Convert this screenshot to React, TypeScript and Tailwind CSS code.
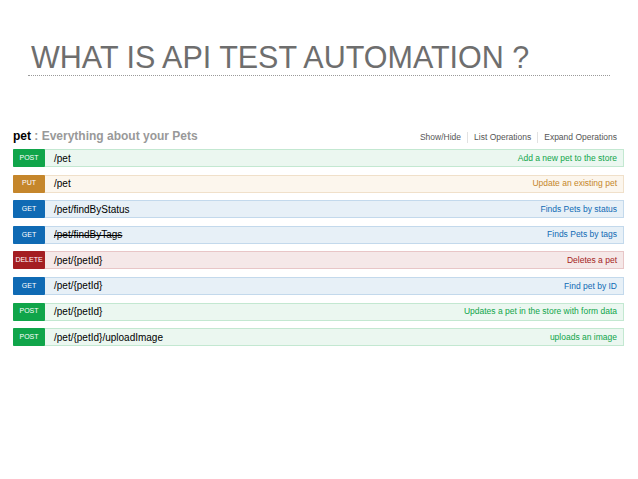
import React from "react";

type Op = { m: "POST" | "PUT" | "GET" | "DELETE"; path: string; desc: string; strike?: boolean };

const ops: Op[] = [
  { m: "POST", path: "/pet", desc: "Add a new pet to the store" },
  { m: "PUT", path: "/pet", desc: "Update an existing pet" },
  { m: "GET", path: "/pet/findByStatus", desc: "Finds Pets by status" },
  { m: "GET", path: "/pet/findByTags", desc: "Finds Pets by tags", strike: true },
  { m: "DELETE", path: "/pet/{petId}", desc: "Deletes a pet" },
  { m: "GET", path: "/pet/{petId}", desc: "Find pet by ID" },
  { m: "POST", path: "/pet/{petId}", desc: "Updates a pet in the store with form data" },
  { m: "POST", path: "/pet/{petId}/uploadImage", desc: "uploads an image" },
];

const styles: Record<Op["m"], { row: string; badge: string; text: string }> = {
  POST: { row: "bg-[#ebf7f0] border-[#c3e8d1]", badge: "bg-[#10a54a]", text: "text-[#10a54a]" },
  PUT: { row: "bg-[#fcf6ed] border-[#f0e0ca]", badge: "bg-[#c5862b]", text: "text-[#c5862b]" },
  GET: { row: "bg-[#e7f0f7] border-[#c3d9ec]", badge: "bg-[#0f6ab4]", text: "text-[#0f6ab4]" },
  DELETE: { row: "bg-[#f5e8e8] border-[#e8c6c7]", badge: "bg-[#a41e22]", text: "text-[#a41e22]" },
};

export default function App() {
  return (
    <div
      className="w-[638px] h-[479px] bg-white overflow-hidden"
      style={{ fontFamily: '"Liberation Sans", Arial, sans-serif' }}
    >
      <div className="pt-[40px] pl-[31px] pr-[20px]">
        <h1 className="text-[30.5px] leading-[34px] text-[#6e6e6e] font-normal whitespace-nowrap">
          WHAT IS API TEST AUTOMATION ?
        </h1>
      </div>
      <div className="ml-[28px] w-[582px] mt-[1px] border-b border-dotted border-[#9a9a9a]" />

      <div className="mt-[52px] pl-[13px] pr-[14px]">
        <div className="flex items-end justify-between h-[16px] mb-[5px]">
          <div className="text-[12px] leading-[16px] font-bold">
            <span className="text-black">pet</span>
            <span className="text-[#999]"> : Everything about your Pets</span>
          </div>
          <div className="flex items-center text-[8.5px] leading-[12px] text-[#555] pr-[7px] pb-[1px]">
            <span>Show/Hide</span>
            <span className="mx-[6px] h-[11px] border-l border-[#e2e2e2]" />
            <span>List Operations</span>
            <span className="mx-[6px] h-[11px] border-l border-[#e2e2e2]" />
            <span>Expand Operations</span>
          </div>
        </div>
        <div className="flex flex-col gap-[7.6px]">
          {ops.map((o, i) => {
            const s = styles[o.m];
            return (
              <div key={i} className={`flex items-center h-[18px] border ${s.row}`}>
                <div
                  className={`${s.badge} w-[32px] h-[18px] -my-px -ml-px flex items-center justify-center text-white text-[7px] rounded-[1px]`}
                >
                  {o.m}
                </div>
                <div className={`ml-[9px] text-[10px] text-black ${o.strike ? "line-through" : ""}`}>
                  {o.path}
                </div>
                <div className={`ml-auto mr-[6px] text-[8.5px] ${s.text}`}>{o.desc}</div>
              </div>
            );
          })}
        </div>
      </div>
    </div>
  );
}
